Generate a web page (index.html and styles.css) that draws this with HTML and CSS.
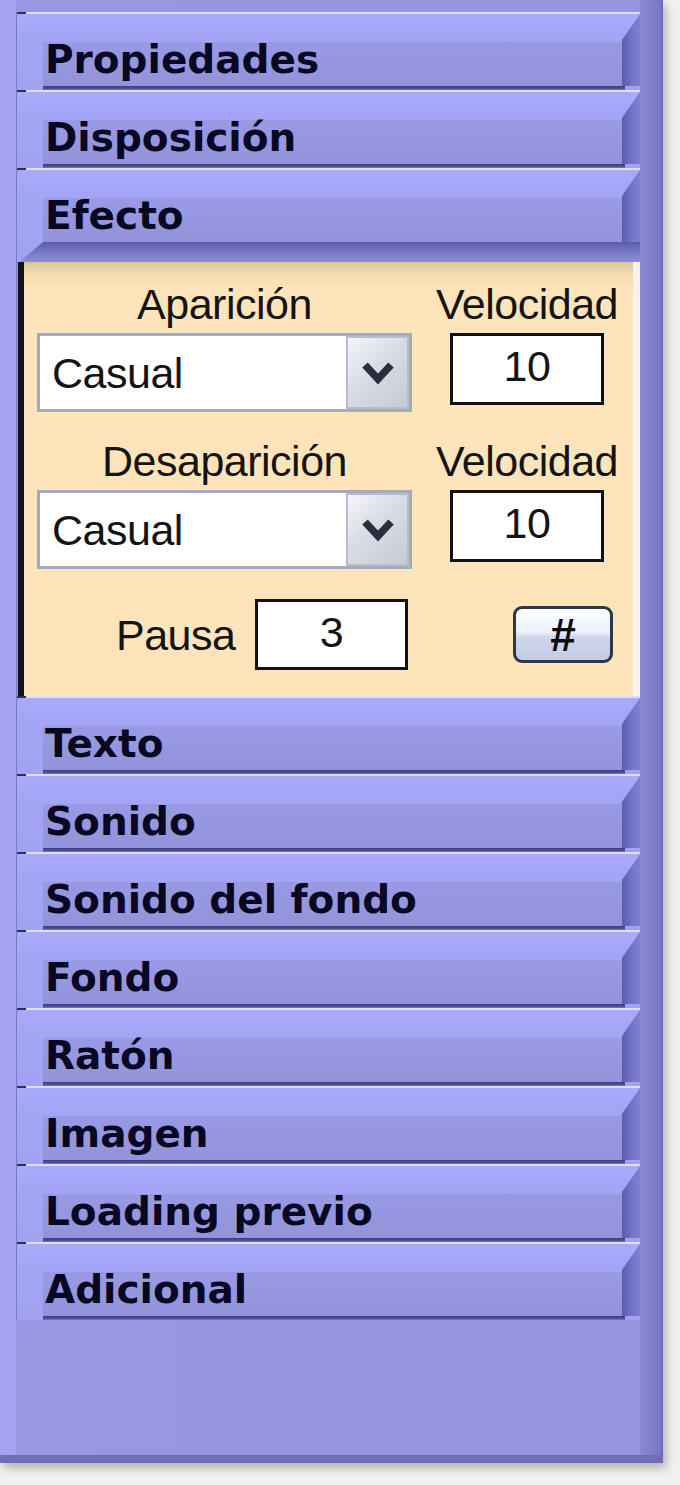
FILE: index.html
```html
<!DOCTYPE html>
<html lang="es">
<head>
<meta charset="utf-8">
<title>Panel</title>
<link rel="stylesheet" href="styles.css">
</head>
<body>
<div class="frame">
  <div class="stack">
    <div class="hdr"><div class="face">Propiedades</div><div class="side"></div><div class="line"></div></div>
    <div class="hdr"><div class="face">Disposición</div><div class="side"></div><div class="line"></div></div>
    <div class="hdr open"><div class="face">Efecto</div><div class="side"></div><div class="bevel"></div></div>
    <div class="panel">
      <div class="fx-grid">
        <div class="lbl"><span>Aparición</span></div>
        <div class="lbl"><span>Velocidad</span></div>
        <div class="combo"><span class="combo-text">Casual</span><span class="combo-btn"><svg width="36" height="26" viewBox="0 0 36 26"><path d="M5 5 L18 19 L31 5" fill="none" stroke="#283040" stroke-width="7.5"/></svg></span></div>
        <div class="tbox">10</div>
        <div class="lbl lbl-2"><span>Desaparición</span></div>
        <div class="lbl lbl-2"><span>Velocidad</span></div>
        <div class="combo"><span class="combo-text">Casual</span><span class="combo-btn"><svg width="36" height="26" viewBox="0 0 36 26"><path d="M5 5 L18 19 L31 5" fill="none" stroke="#283040" stroke-width="7.5"/></svg></span></div>
        <div class="tbox">10</div>
      </div>
      <div class="pause-row">
        <span class="pause-label">Pausa</span>
        <div class="tbox pause-box">3</div>
        <div class="hash-btn">#</div>
      </div>
    </div>
    <div class="hdr"><div class="face">Texto</div><div class="side"></div><div class="line"></div></div>
    <div class="hdr"><div class="face">Sonido</div><div class="side"></div><div class="line"></div></div>
    <div class="hdr"><div class="face">Sonido del fondo</div><div class="side"></div><div class="line"></div></div>
    <div class="hdr"><div class="face">Fondo</div><div class="side"></div><div class="line"></div></div>
    <div class="hdr"><div class="face">Ratón</div><div class="side"></div><div class="line"></div></div>
    <div class="hdr"><div class="face">Imagen</div><div class="side"></div><div class="line"></div></div>
    <div class="hdr"><div class="face">Loading previo</div><div class="side"></div><div class="line"></div></div>
    <div class="hdr"><div class="face">Adicional</div><div class="side"></div><div class="line"></div></div>
  </div>
</div>
</body>
</html>
```

FILE: styles.css
```css
html, body {
  margin: 0;
  padding: 0;
}
body {
  background: #f1f1ef;
  width: 680px;
  height: 1485px;
  overflow: hidden;
}
.frame {
  width: 663px;
  height: 1463px;
  box-sizing: border-box;
  padding: 12px 23px 0 16px;
  background:
    linear-gradient(90deg, #a4a4f2 0, #a2a2f0 16px, #9898e2 16px, #9696e0 calc(100% - 23px), #8888d4 calc(100% - 23px), #7878c4 calc(100% - 3px), #6a6ab4 100%);
  border-bottom: 8px solid #6e6eb4;
  box-shadow: 3px 5px 9px rgba(60, 60, 60, 0.35);
}
.stack {
  border-left: 1px solid #7a7ac4;
}

/* header bars */
.hdr {
  display: grid;
  grid-template-columns: 26px 1fr 18px;
  grid-template-rows: 30px 44px 4px;
  background:
    linear-gradient(90deg, #2e2e66 0 9px, #dedef6 9px) top left / 100% 2px no-repeat,
    linear-gradient(#aaaafa, #a4a4f4 30px, #a2a2f2);
}
.face {
  grid-column: 2;
  grid-row: 2;
  background: linear-gradient(#9a9ae4, #9393dc);
  padding-left: 2px;
  font-family: "DejaVu Sans", Verdana, sans-serif;
  font-weight: bold;
  font-size: 39px;
  line-height: 35px;
  color: #080822;
  white-space: nowrap;
}
.side {
  grid-column: 3;
  grid-row: 1 / 3;
  margin-top: 2px;
  background: linear-gradient(90deg, #5c5cae, #7676c8 60%, #8080d0);
  clip-path: polygon(100% 0, 100% 100%, 0 100%, 0 26px);
}
.line {
  grid-column: 2 / 4;
  grid-row: 3;
  margin-right: 15px;
  background: linear-gradient(#3c3c76, #54549c 70%, #7a7ac0);
}
.hdr.open {
  grid-template-rows: 30px 44px 20px;
}
.bevel {
  grid-column: 1 / 4;
  grid-row: 3;
  background: linear-gradient(#5c5caa, #7474c4 45%, #8e8edc);
  clip-path: polygon(26px 0, 100% 0, 100% 100%, 2px 100%);
}

/* expanded panel */
.panel {
  margin-left: 1px;
  height: 434px;
  box-sizing: border-box;
  border-left: 6px solid #121212;
  border-right: 7px solid #f6f3ee;
  background: linear-gradient(#dcc59c, #f4dbb0 12px, #fde4ba 30px, #fde4ba);
  padding: 18px 0 0 13px;
  font-family: "Liberation Sans", Arial, sans-serif;
  font-size: 43px;
  letter-spacing: -0.5px;
  color: #141414;
}
.fx-grid {
  display: grid;
  grid-template-columns: 375px 154px;
  column-gap: 38px;
  row-gap: 5px;
  align-items: start;
}
.lbl {
  display: flex;
  justify-content: center;
  line-height: 48px;
  height: 48px;
  white-space: nowrap;
}
.lbl-2 {
  margin-top: 20px;
}
.combo {
  height: 79px;
  box-sizing: border-box;
  border: 3px solid #a3abbf;
  background: #fff;
  display: flex;
  align-items: center;
  padding: 1px 0 1px 0;
}
.combo-text {
  flex: 1;
  padding-left: 12px;
  line-height: 48px;
}
.combo-btn {
  width: 63px;
  height: 73px;
  box-sizing: border-box;
  border: 2px solid #b9bdcb;
  background: linear-gradient(135deg, #f4f6fa, #d9dce4 45%, #c6cad6);
  display: flex;
  align-items: center;
  justify-content: center;
}
.tbox {
  height: 72px;
  box-sizing: border-box;
  border: 3px solid #111;
  background: #fff;
  text-align: center;
  line-height: 60px;
}
.pause-row {
  display: flex;
  align-items: center;
  margin-top: 30px;
  padding-left: 79px;
}
.pause-label {
  width: 139px;
  line-height: 48px;
}
.pause-box {
  width: 153px;
  height: 71px;
}
.hash-btn {
  margin-left: 105px;
  width: 100px;
  height: 57px;
  box-sizing: border-box;
  border: 3px solid #2a3a46;
  border-radius: 9px;
  background: linear-gradient(#fbfdff, #eef2fa 45%, #cfd6ea 55%, #c4cce6);
  font-weight: bold;
  font-size: 46px;
  line-height: 52px;
  text-align: center;
  letter-spacing: 0;
  color: #0c0c0c;
}
```
